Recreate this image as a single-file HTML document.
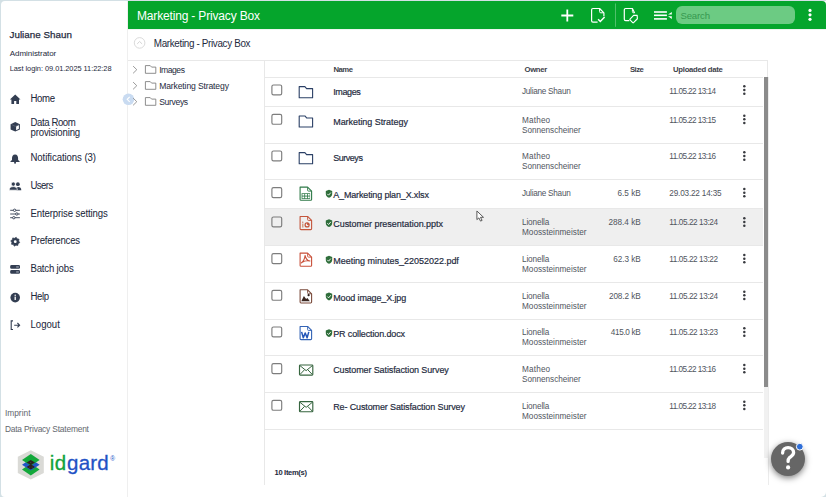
<!DOCTYPE html>
<html><head><meta charset="utf-8"><style>
html,body{margin:0;padding:0;width:826px;height:497px;overflow:hidden;background:#fff;}
body{position:relative;font-family:"Liberation Sans",sans-serif;}
.t{position:absolute;white-space:nowrap;}
svg{position:absolute;overflow:visible;}
</style></head><body>
<div style="position:absolute;left:0px;top:0px;width:826px;height:497px;background:#d3e0e5;"></div>
<div style="position:absolute;left:1px;top:1px;width:127px;height:496px;background:#fff;border-radius:4px 0 0 4px;"></div>
<div style="position:absolute;left:127px;top:1px;width:1px;height:496px;background:#efefef;"></div>
<div style="position:absolute;left:128px;top:1px;width:698px;height:496px;background:#fff;border-bottom-right-radius:5px;"></div>
<div style="position:absolute;left:128px;top:1px;width:698px;height:28px;background:#05a52c;border-top-right-radius:4px;"></div>
<div style="position:absolute;left:128px;top:29px;width:698px;height:1px;background:#eef6f0;"></div>
<div class="t" style="left:9.50px;top:28.00px;font-size:9.8px;line-height:13px;color:#1e2a3d;letter-spacing:0.024px;-webkit-text-stroke:0.25px #1e2a3d;">Juliane Shaun</div>
<div class="t" style="left:9.70px;top:48.00px;font-size:8.0px;line-height:11px;color:#1e2a3d;letter-spacing:-0.044px;">Administrator</div>
<div class="t" style="left:9.70px;top:63.00px;font-size:7.4px;line-height:11px;color:#1e2a3d;letter-spacing:-0.038px;">Last login: 09.01.2025 11:22:28</div>
<div class="t" style="left:30.50px;top:92.00px;font-size:9.6px;line-height:13px;color:#1e2a3d;letter-spacing:-0.371px;-webkit-text-stroke:0.05px #1e2a3d;transform:scaleY(1.06);transform-origin:0 10px;">Home</div>
<div class="t" style="left:30.50px;top:116.00px;font-size:9.6px;line-height:13px;color:#1e2a3d;letter-spacing:-0.407px;-webkit-text-stroke:0.05px #1e2a3d;transform:scaleY(1.06);transform-origin:0 10px;">Data Room</div>
<div class="t" style="left:30.50px;top:126.00px;font-size:9.6px;line-height:13px;color:#1e2a3d;letter-spacing:-0.139px;-webkit-text-stroke:0.05px #1e2a3d;transform:scaleY(1.06);transform-origin:0 10px;">provisioning</div>
<div class="t" style="left:30.50px;top:151.00px;font-size:9.6px;line-height:13px;color:#1e2a3d;letter-spacing:-0.074px;-webkit-text-stroke:0.05px #1e2a3d;transform:scaleY(1.06);transform-origin:0 10px;">Notifications (3)</div>
<div class="t" style="left:30.50px;top:179.00px;font-size:9.6px;line-height:13px;color:#1e2a3d;letter-spacing:-0.591px;-webkit-text-stroke:0.05px #1e2a3d;transform:scaleY(1.06);transform-origin:0 10px;">Users</div>
<div class="t" style="left:30.50px;top:207.00px;font-size:9.6px;line-height:13px;color:#1e2a3d;letter-spacing:-0.123px;-webkit-text-stroke:0.05px #1e2a3d;transform:scaleY(1.06);transform-origin:0 10px;">Enterprise settings</div>
<div class="t" style="left:30.50px;top:234.00px;font-size:9.6px;line-height:13px;color:#1e2a3d;letter-spacing:-0.216px;-webkit-text-stroke:0.05px #1e2a3d;transform:scaleY(1.06);transform-origin:0 10px;">Preferences</div>
<div class="t" style="left:30.50px;top:262.00px;font-size:9.6px;line-height:13px;color:#1e2a3d;letter-spacing:-0.180px;-webkit-text-stroke:0.05px #1e2a3d;transform:scaleY(1.06);transform-origin:0 10px;">Batch jobs</div>
<div class="t" style="left:30.50px;top:290.00px;font-size:9.6px;line-height:13px;color:#1e2a3d;letter-spacing:-0.416px;-webkit-text-stroke:0.05px #1e2a3d;transform:scaleY(1.06);transform-origin:0 10px;">Help</div>
<div class="t" style="left:30.50px;top:318.00px;font-size:9.6px;line-height:13px;color:#1e2a3d;letter-spacing:0.007px;-webkit-text-stroke:0.05px #1e2a3d;transform:scaleY(1.06);transform-origin:0 10px;">Logout</div>
<div class="t" style="left:4.90px;top:407.00px;font-size:8.4px;line-height:12px;color:#63676e;letter-spacing:0.005px;">Imprint</div>
<div class="t" style="left:4.90px;top:423.00px;font-size:8.4px;line-height:12px;color:#63676e;letter-spacing:-0.187px;">Data Privacy Statement</div>
<div class="t" style="left:137.00px;top:8.00px;font-size:12.0px;line-height:16px;color:#ffffff;letter-spacing:-0.169px;">Marketing - Privacy Box</div>
<div style="position:absolute;left:676px;top:5.7px;width:118.6px;height:18.3px;background:#6ccb83;border-radius:6px;"></div>
<div class="t" style="left:680.40px;top:9.00px;font-size:9.6px;line-height:13px;color:#36984f;letter-spacing:-0.163px;">Search</div>
<div class="t" style="left:153.80px;top:37.00px;font-size:9.9px;line-height:13px;color:#1e2a3d;letter-spacing:-0.342px;transform:scaleY(1.08);transform-origin:0 10px;">Marketing - Privacy Box</div>
<div style="position:absolute;left:128px;top:60px;width:136px;height:1px;background:#e8e8e8;"></div>
<div class="t" style="left:159.20px;top:64.00px;font-size:8.6px;line-height:12px;color:#1e2a3d;letter-spacing:-0.480px;transform:scaleY(1.06);transform-origin:0 9px;">Images</div>
<div class="t" style="left:159.20px;top:80.00px;font-size:8.6px;line-height:12px;color:#1e2a3d;letter-spacing:-0.140px;transform:scaleY(1.06);transform-origin:0 9px;">Marketing Strategy</div>
<div class="t" style="left:159.20px;top:96.00px;font-size:8.6px;line-height:12px;color:#1e2a3d;letter-spacing:-0.344px;transform:scaleY(1.06);transform-origin:0 9px;">Surveys</div>
<div style="position:absolute;left:264px;top:60px;width:504px;height:1px;background:#e8e8e8;"></div>
<div style="position:absolute;left:264px;top:60px;width:1px;height:425px;background:#e8e8e8;"></div>
<div style="position:absolute;left:767px;top:60px;width:1px;height:17px;background:#e8e8e8;"></div>
<div style="position:absolute;left:768px;top:77px;width:1px;height:408px;background:#ececec;"></div>
<div style="position:absolute;left:264px;top:77px;width:499px;height:1px;background:#e8e8e8;"></div>
<div class="t" style="left:333.40px;top:64.00px;font-size:7.7px;line-height:11px;color:#3d424b;font-weight:bold;letter-spacing:-0.458px;">Name</div>
<div class="t" style="left:524.60px;top:64.00px;font-size:7.7px;line-height:11px;color:#3d424b;font-weight:bold;letter-spacing:-0.341px;">Owner</div>
<div class="t" style="left:630.00px;top:64.00px;font-size:7.7px;line-height:11px;color:#3d424b;font-weight:bold;letter-spacing:-0.536px;">Size</div>
<div class="t" style="left:673.10px;top:64.00px;font-size:7.7px;line-height:11px;color:#3d424b;font-weight:bold;letter-spacing:-0.271px;">Uploaded date</div>
<div style="position:absolute;left:265px;top:106px;width:498px;height:1px;background:#e8e8e8;"></div>
<div class="t" style="left:333.20px;top:86.00px;font-size:9.0px;line-height:12px;color:#1e2a3d;letter-spacing:-0.382px;-webkit-text-stroke:0.18px #1e2a3d;transform:scaleY(1.07);transform-origin:0 9px;">Images</div>
<div class="t" style="left:522.00px;top:86.00px;font-size:8.2px;line-height:11px;color:#50555e;letter-spacing:-0.264px;">Juliane Shaun</div>
<div class="t" style="left:669.30px;top:86.00px;font-size:8.2px;line-height:11px;color:#50555e;letter-spacing:-0.555px;">11.05.22 13:14</div>
<div style="position:absolute;left:265px;top:143px;width:498px;height:1px;background:#e8e8e8;"></div>
<div class="t" style="left:333.20px;top:116.00px;font-size:9.0px;line-height:12px;color:#1e2a3d;letter-spacing:-0.049px;-webkit-text-stroke:0.18px #1e2a3d;transform:scaleY(1.07);transform-origin:0 9px;">Marketing Strategy</div>
<div class="t" style="left:522.00px;top:115.00px;font-size:8.2px;line-height:11px;color:#50555e;letter-spacing:0.171px;">Matheo</div>
<div class="t" style="left:522.00px;top:125.00px;font-size:8.2px;line-height:11px;color:#50555e;letter-spacing:-0.028px;">Sonnenscheiner</div>
<div class="t" style="left:669.30px;top:115.00px;font-size:8.2px;line-height:11px;color:#50555e;letter-spacing:-0.555px;">11.05.22 13:15</div>
<div style="position:absolute;left:265px;top:179px;width:498px;height:1px;background:#e8e8e8;"></div>
<div class="t" style="left:333.20px;top:152.00px;font-size:9.0px;line-height:12px;color:#1e2a3d;letter-spacing:-0.468px;-webkit-text-stroke:0.18px #1e2a3d;transform:scaleY(1.07);transform-origin:0 9px;">Surveys</div>
<div class="t" style="left:522.00px;top:151.00px;font-size:8.2px;line-height:11px;color:#50555e;letter-spacing:0.171px;">Matheo</div>
<div class="t" style="left:522.00px;top:161.00px;font-size:8.2px;line-height:11px;color:#50555e;letter-spacing:-0.028px;">Sonnenscheiner</div>
<div class="t" style="left:669.30px;top:151.00px;font-size:8.2px;line-height:11px;color:#50555e;letter-spacing:-0.555px;">11.05.22 13:16</div>
<div style="position:absolute;left:265px;top:208px;width:498px;height:1px;background:#e8e8e8;"></div>
<div class="t" style="left:333.20px;top:189.00px;font-size:9.0px;line-height:12px;color:#1e2a3d;letter-spacing:-0.152px;-webkit-text-stroke:0.18px #1e2a3d;transform:scaleY(1.07);transform-origin:0 9px;">A_Marketing plan_X.xlsx</div>
<div class="t" style="left:522.00px;top:188.00px;font-size:8.2px;line-height:11px;color:#50555e;letter-spacing:-0.264px;">Juliane Shaun</div>
<div class="t" style="left:617.40px;top:188.00px;font-size:8.2px;line-height:11px;color:#50555e;letter-spacing:0.031px;">6.5 kB</div>
<div class="t" style="left:669.30px;top:188.00px;font-size:8.2px;line-height:11px;color:#50555e;letter-spacing:-0.179px;">29.03.22 14:35</div>
<div style="position:absolute;left:265px;top:209px;width:498px;height:36px;background:#efefef;"></div>
<div style="position:absolute;left:265px;top:245px;width:498px;height:1px;background:#e8e8e8;"></div>
<div class="t" style="left:333.20px;top:218.00px;font-size:9.0px;line-height:12px;color:#1e2a3d;letter-spacing:-0.030px;-webkit-text-stroke:0.18px #1e2a3d;transform:scaleY(1.07);transform-origin:0 9px;">Customer presentation.pptx</div>
<div class="t" style="left:522.00px;top:217.00px;font-size:8.2px;line-height:11px;color:#50555e;letter-spacing:-0.125px;">Lionella</div>
<div class="t" style="left:522.00px;top:227.00px;font-size:8.2px;line-height:11px;color:#50555e;letter-spacing:0.023px;">Moossteinmeister</div>
<div class="t" style="left:608.40px;top:217.00px;font-size:8.2px;line-height:11px;color:#50555e;letter-spacing:0.005px;">288.4 kB</div>
<div class="t" style="left:669.30px;top:217.00px;font-size:8.2px;line-height:11px;color:#50555e;letter-spacing:-0.414px;">11.05.22 13:24</div>
<div style="position:absolute;left:265px;top:282px;width:498px;height:1px;background:#e8e8e8;"></div>
<div class="t" style="left:333.20px;top:255.00px;font-size:9.0px;line-height:12px;color:#1e2a3d;letter-spacing:-0.015px;-webkit-text-stroke:0.18px #1e2a3d;transform:scaleY(1.07);transform-origin:0 9px;">Meeting minutes_22052022.pdf</div>
<div class="t" style="left:522.00px;top:254.00px;font-size:8.2px;line-height:11px;color:#50555e;letter-spacing:-0.125px;">Lionella</div>
<div class="t" style="left:522.00px;top:264.00px;font-size:8.2px;line-height:11px;color:#50555e;letter-spacing:0.023px;">Moossteinmeister</div>
<div class="t" style="left:613.30px;top:254.00px;font-size:8.2px;line-height:11px;color:#50555e;letter-spacing:-0.051px;">62.3 kB</div>
<div class="t" style="left:669.30px;top:254.00px;font-size:8.2px;line-height:11px;color:#50555e;letter-spacing:-0.414px;">11.05.22 13:22</div>
<div style="position:absolute;left:265px;top:319px;width:498px;height:1px;background:#e8e8e8;"></div>
<div class="t" style="left:333.20px;top:292.00px;font-size:9.0px;line-height:12px;color:#1e2a3d;letter-spacing:-0.136px;-webkit-text-stroke:0.18px #1e2a3d;transform:scaleY(1.07);transform-origin:0 9px;">Mood image_X.jpg</div>
<div class="t" style="left:522.00px;top:291.00px;font-size:8.2px;line-height:11px;color:#50555e;letter-spacing:-0.125px;">Lionella</div>
<div class="t" style="left:522.00px;top:301.00px;font-size:8.2px;line-height:11px;color:#50555e;letter-spacing:0.023px;">Moossteinmeister</div>
<div class="t" style="left:608.90px;top:291.00px;font-size:8.2px;line-height:11px;color:#50555e;letter-spacing:-0.066px;">208.2 kB</div>
<div class="t" style="left:669.30px;top:291.00px;font-size:8.2px;line-height:11px;color:#50555e;letter-spacing:-0.414px;">11.05.22 13:24</div>
<div style="position:absolute;left:265px;top:355px;width:498px;height:1px;background:#e8e8e8;"></div>
<div class="t" style="left:333.20px;top:328.00px;font-size:9.0px;line-height:12px;color:#1e2a3d;letter-spacing:-0.131px;-webkit-text-stroke:0.18px #1e2a3d;transform:scaleY(1.07);transform-origin:0 9px;">PR collection.docx</div>
<div class="t" style="left:522.00px;top:327.00px;font-size:8.2px;line-height:11px;color:#50555e;letter-spacing:-0.125px;">Lionella</div>
<div class="t" style="left:522.00px;top:337.00px;font-size:8.2px;line-height:11px;color:#50555e;letter-spacing:0.023px;">Moossteinmeister</div>
<div class="t" style="left:610.70px;top:327.00px;font-size:8.2px;line-height:11px;color:#50555e;letter-spacing:-0.324px;">415.0 kB</div>
<div class="t" style="left:669.30px;top:327.00px;font-size:8.2px;line-height:11px;color:#50555e;letter-spacing:-0.414px;">11.05.22 13:23</div>
<div style="position:absolute;left:265px;top:392px;width:498px;height:1px;background:#e8e8e8;"></div>
<div class="t" style="left:333.20px;top:364.00px;font-size:9.0px;line-height:12px;color:#1e2a3d;letter-spacing:-0.109px;-webkit-text-stroke:0.18px #1e2a3d;transform:scaleY(1.07);transform-origin:0 9px;">Customer Satisfaction Survey</div>
<div class="t" style="left:522.00px;top:364.00px;font-size:8.2px;line-height:11px;color:#50555e;letter-spacing:0.171px;">Matheo</div>
<div class="t" style="left:522.00px;top:374.00px;font-size:8.2px;line-height:11px;color:#50555e;letter-spacing:-0.028px;">Sonnenscheiner</div>
<div class="t" style="left:669.30px;top:364.00px;font-size:8.2px;line-height:11px;color:#50555e;letter-spacing:-0.555px;">11.05.22 13:16</div>
<div style="position:absolute;left:265px;top:429px;width:498px;height:1px;background:#e8e8e8;"></div>
<div class="t" style="left:333.20px;top:401.00px;font-size:9.0px;line-height:12px;color:#1e2a3d;letter-spacing:-0.124px;-webkit-text-stroke:0.18px #1e2a3d;transform:scaleY(1.07);transform-origin:0 9px;">Re- Customer Satisfaction Survey</div>
<div class="t" style="left:522.00px;top:401.00px;font-size:8.2px;line-height:11px;color:#50555e;letter-spacing:-0.125px;">Lionella</div>
<div class="t" style="left:522.00px;top:411.00px;font-size:8.2px;line-height:11px;color:#50555e;letter-spacing:0.023px;">Moossteinmeister</div>
<div class="t" style="left:669.30px;top:401.00px;font-size:8.2px;line-height:11px;color:#50555e;letter-spacing:-0.555px;">11.05.22 13:18</div>
<div class="t" style="left:49.80px;top:450.00px;font-size:20.5px;line-height:25px;color:#12a33a;letter-spacing:0.451px;-webkit-text-stroke:0.3px #12a33a;">id</div>
<div class="t" style="left:67.00px;top:450.00px;font-size:20.5px;line-height:25px;color:#1f52c4;letter-spacing:0.227px;-webkit-text-stroke:0.3px #2255c8;">gard</div>
<div class="t" style="left:110.20px;top:454.00px;font-size:6.5px;line-height:9px;color:#2255c8;">®</div>
<div class="t" style="left:274.60px;top:467.00px;font-size:7.6px;line-height:11px;color:#1e2a3d;font-weight:bold;letter-spacing:-0.342px;">10 Item(s)</div>
<div style="position:absolute;left:764px;top:77px;width:4px;height:381px;background:#f1f1f1;"></div>
<div style="position:absolute;left:764px;top:77px;width:4px;height:310px;background:#8b8b8b;"></div>
<div style="position:absolute;left:771px;top:442px;width:34px;height:34px;background:#666;border-radius:50%;box-shadow:0 2px 6px rgba(0,0,0,0.5);"></div>
<svg width="826" height="497" style="left:0;top:0" viewBox="0 0 826 497"><path d="M561.3 15.5H573.3M567.3 9.5V21.5" stroke="#fff" stroke-width="1.8" fill="none"/><path d="M597.6 22.2H593Q591.6 22.2 591.6 20.8V9.9Q591.6 8.5 593 8.5H599.6L603.9 12.9V16.3" stroke="#fff" stroke-width="1.2" fill="none" stroke-linejoin="round"/><path d="M599.6 8.7V11.6Q599.6 12.8 600.8 12.8H603.7" stroke="#fff" stroke-width="1" fill="none"/><path d="M598.1 19.2L600.3 21.5L604.6 17" stroke="#fff" stroke-width="1.5" fill="none"/><path d="M615.5 3.5V26.8" stroke="rgba(255,255,255,0.3)" stroke-width="1"/><path d="M629.3 20.6H625.7Q624.3 20.6 624.3 19.2V9.9Q624.3 8.5 625.7 8.5H632.4L634.6 12.9" stroke="#fff" stroke-width="1.2" fill="none" stroke-linejoin="round"/><path d="M632.4 8.7V11.6Q632.4 12.8 633.6 12.8H634.4" stroke="#fff" stroke-width="1" fill="none"/><g transform="rotate(-45 634.2 18.4)"><path d="M630.8 15.9H636.2L638.4 18.4L636.2 20.9H630.8Q630.2 20.9 630.2 20.3V16.5Q630.2 15.9 630.8 15.9Z" stroke="#fff" stroke-width="1.15" fill="#05a52c" stroke-linejoin="round"/></g><rect x="654" y="11.2" width="12.9" height="1.6" fill="#fff"/><rect x="654" y="14.5" width="12.9" height="1.6" fill="#fff"/><rect x="654" y="18.1" width="12.9" height="1.6" fill="#fff"/><path d="M668.1 14.5H671.8V11.9Z M668.1 16.3H671.8V18.9Z" fill="#fff"/><circle cx="810" cy="10.4" r="1.6" fill="#fff"/><circle cx="810" cy="14.8" r="1.6" fill="#fff"/><circle cx="810" cy="19.3" r="1.6" fill="#fff"/><path d="M15.2 94.5L9.9 99.4H11.4V104H14.1V100.9H16.3V104H19V99.4H20.5Z" fill="#333e52"/><path d="M15.25 122L19.9 124.2V129.4L15.25 131.6L10.6 129.4V124.2Z" fill="#333e52"/><path d="M16.1 126.4L18.9 125V128.8L16.1 130.2Z" fill="#fff"/><path d="M11.6 124.6L15.25 126.3L18.9 124.6" stroke="#6b7384" stroke-width="0.6" fill="none"/><path d="M15.05 154.5C12.8 154.5 12 156.4 12 158.4V160L10.5 161.2V161.9H19.6V161.2L18.1 160V158.4C18.1 156.4 17.3 154.5 15.05 154.5Z" fill="#333e52"/><circle cx="15.05" cy="162.7" r="1" fill="#333e52"/><circle cx="17.9" cy="184.2" r="1.9" fill="#333e52"/><path d="M16.5 190.2C16.5 187.9 17.2 186.9 18.2 186.9C20.2 186.9 21.3 188 21.3 190.2Z" fill="#333e52"/><circle cx="13.3" cy="184.1" r="2.1" fill="#333e52" stroke="#fff" stroke-width="0.7"/><path d="M9.2 190.2C9.2 187.6 11.2 186.6 13.3 186.6C15.4 186.6 17.4 187.6 17.4 190.2Z" fill="#333e52" stroke="#fff" stroke-width="0.7"/><path d="M10.2 210.3H19.9" stroke="#333e52" stroke-width="0.9"/><circle cx="14.6" cy="210.3" r="1.2" fill="#fff" stroke="#333e52" stroke-width="0.9"/><path d="M10.2 214.0H19.9" stroke="#333e52" stroke-width="0.9"/><circle cx="16.8" cy="214.0" r="1.2" fill="#fff" stroke="#333e52" stroke-width="0.9"/><path d="M10.2 217.7H19.9" stroke="#333e52" stroke-width="0.9"/><circle cx="13.8" cy="217.7" r="1.2" fill="#fff" stroke="#333e52" stroke-width="0.9"/><path d="M16.15 237.19L17.19 238.79L19.07 239.14L18.68 241.02L19.76 242.60L18.16 243.64L17.81 245.52L15.93 245.13L14.35 246.21L13.31 244.61L11.43 244.26L11.82 242.38L10.74 240.80L12.34 239.76L12.69 237.88L14.57 238.27Z" fill="#333e52" stroke="#333e52" stroke-width="0.6" stroke-linejoin="round"/><circle cx="15.25" cy="241.7" r="1.4" fill="#fff"/><rect x="10.2" y="265.1" width="9.8" height="3.7" rx="1.3" fill="#333e52"/><rect x="10.2" y="270.1" width="9.8" height="3.7" rx="1.3" fill="#333e52"/><rect x="16.2" y="266.2" width="2.6" height="1.5" fill="#8a92a0"/><rect x="16.2" y="271.2" width="2.6" height="1.5" fill="#8a92a0"/><circle cx="15.2" cy="297.6" r="4.8" fill="#333e52"/><rect x="14.55" y="296.6" width="1.3" height="3.4" fill="#fff"/><circle cx="15.2" cy="295.2" r="0.75" fill="#fff"/><path d="M13 320.9H11.2V329.5H13" stroke="#333e52" stroke-width="1.1" fill="none"/><path d="M14.2 325.2H19.6M17.4 323L19.6 325.2L17.4 327.4" stroke="#333e52" stroke-width="1.1" fill="none"/><circle cx="139.6" cy="42.9" r="5.3" stroke="#d6d6d6" stroke-width="0.9" fill="none"/><path d="M137.2 43.9L139.6 41.5L142.1 43.9" stroke="#cfcfcf" stroke-width="0.9" fill="none"/><circle cx="128.45" cy="99.3" r="5.8" fill="#c9dbf1"/><path d="M129.7 96.8L127.2 99.3L129.7 101.8" stroke="#fff" stroke-width="1.1" fill="none"/><path d="M133.1 66.1L136.8 69.7L133.1 73.3" stroke="#8e8e8e" stroke-width="0.9" fill="none"/><path d="M145.4 73.3V65.6H150.2L151.6 67.1H155.8V73.3Z" stroke="#7a7a7a" stroke-width="0.85" fill="none"/><path d="M133.1 82.1L136.8 85.7L133.1 89.3" stroke="#8e8e8e" stroke-width="0.9" fill="none"/><path d="M145.4 89.3V81.6H150.2L151.6 83.1H155.8V89.3Z" stroke="#7a7a7a" stroke-width="0.85" fill="none"/><path d="M133.1 98.1L136.8 101.7L133.1 105.3" stroke="#8e8e8e" stroke-width="0.9" fill="none"/><path d="M145.4 105.3V97.6H150.2L151.6 99.1H155.8V105.3Z" stroke="#7a7a7a" stroke-width="0.85" fill="none"/><rect x="271.9" y="85.00" width="9.8" height="9.9" rx="1.6" stroke="#7d7d7d" stroke-width="1.15" fill="none"/><path d="M299.2 97.70V86.60H304.9L306.6 88.60H312.6V97.70Z" stroke="#2b4066" stroke-width="1.1" fill="none" stroke-linejoin="round"/><circle cx="744.3" cy="86.30" r="1.25" fill="#383a3f"/><circle cx="744.3" cy="90.00" r="1.25" fill="#383a3f"/><circle cx="744.3" cy="93.70" r="1.25" fill="#383a3f"/><rect x="271.9" y="114.33" width="9.8" height="9.9" rx="1.6" stroke="#7d7d7d" stroke-width="1.15" fill="none"/><path d="M299.2 127.03V115.93H304.9L306.6 117.93H312.6V127.03Z" stroke="#2b4066" stroke-width="1.1" fill="none" stroke-linejoin="round"/><circle cx="744.3" cy="115.63" r="1.25" fill="#383a3f"/><circle cx="744.3" cy="119.33" r="1.25" fill="#383a3f"/><circle cx="744.3" cy="123.03" r="1.25" fill="#383a3f"/><rect x="271.9" y="151.00" width="9.8" height="9.9" rx="1.6" stroke="#7d7d7d" stroke-width="1.15" fill="none"/><path d="M299.2 163.70V152.60H304.9L306.6 154.60H312.6V163.70Z" stroke="#2b4066" stroke-width="1.1" fill="none" stroke-linejoin="round"/><circle cx="744.3" cy="152.30" r="1.25" fill="#383a3f"/><circle cx="744.3" cy="156.00" r="1.25" fill="#383a3f"/><circle cx="744.3" cy="159.70" r="1.25" fill="#383a3f"/><rect x="271.9" y="187.67" width="9.8" height="9.9" rx="1.6" stroke="#7d7d7d" stroke-width="1.15" fill="none"/><path d="M300.1 187.11999999999998H307.6L311.6 191.11999999999998V199.42Q311.6 200.32 310.7 200.32H301Q300.1 200.32 300.1 199.42Z" stroke="#2f7a48" stroke-width="1.1" fill="none" stroke-linejoin="round"/><path d="M307.6 187.32V190.21999999999997Q307.6 191.11999999999998 308.5 191.11999999999998H311.4" stroke="#2f7a48" stroke-width="0.9" fill="none"/><rect x="301.6" y="193.21999999999997" width="8.5" height="5.7" fill="#2f7a48"/><rect x="302.4" y="193.92" width="1.9" height="1.7" fill="#fff"/><rect x="302.4" y="196.51999999999998" width="1.9" height="1.7" fill="#fff"/><rect x="305.1" y="193.92" width="1.9" height="1.7" fill="#fff"/><rect x="305.1" y="196.51999999999998" width="1.9" height="1.7" fill="#fff"/><rect x="307.8" y="193.92" width="1.9" height="1.7" fill="#fff"/><rect x="307.8" y="196.51999999999998" width="1.9" height="1.7" fill="#fff"/><path d="M329 189.87L332.2 191.07V193.67C332.2 195.67 330.9 197.07 329 197.77C327.1 197.07 325.8 195.67 325.8 193.67V191.07Z" fill="#2f6e3b"/><path d="M327.3 193.87L328.6 195.17L330.8 192.57" stroke="#fff" stroke-width="0.9" fill="none"/><circle cx="744.3" cy="188.97" r="1.25" fill="#383a3f"/><circle cx="744.3" cy="192.67" r="1.25" fill="#383a3f"/><circle cx="744.3" cy="196.37" r="1.25" fill="#383a3f"/><rect x="271.9" y="217.00" width="9.8" height="9.9" rx="1.6" stroke="#7d7d7d" stroke-width="1.15" fill="none"/><path d="M300.1 216.45H307.6L311.6 220.45V228.75Q311.6 229.65 310.7 229.65H301Q300.1 229.65 300.1 228.75Z" stroke="#c4553b" stroke-width="1.1" fill="none" stroke-linejoin="round"/><path d="M307.6 216.65V219.54999999999998Q307.6 220.45 308.5 220.45H311.4" stroke="#c4553b" stroke-width="0.9" fill="none"/><rect x="302.2" y="223.54999999999998" width="1.2" height="4" fill="#d08a6a"/><circle cx="302.8" cy="222.15" r="0.6" fill="#c4553b"/><circle cx="307.1" cy="224.95" r="2" stroke="#c4553b" stroke-width="1.2" fill="none"/><path d="M307.1 224.95V222.65A2.3 2.3 0 0 1 309.4 224.95Z" fill="#c4553b"/><path d="M329 219.20000000000002L332.2 220.4V223.0C332.2 225.0 330.9 226.4 329 227.10000000000002C327.1 226.4 325.8 225.0 325.8 223.0V220.4Z" fill="#2f6e3b"/><path d="M327.3 223.20000000000002L328.6 224.5L330.8 221.9" stroke="#fff" stroke-width="0.9" fill="none"/><circle cx="744.3" cy="218.30" r="1.25" fill="#383a3f"/><circle cx="744.3" cy="222.00" r="1.25" fill="#383a3f"/><circle cx="744.3" cy="225.70" r="1.25" fill="#383a3f"/><rect x="271.9" y="253.67" width="9.8" height="9.9" rx="1.6" stroke="#7d7d7d" stroke-width="1.15" fill="none"/><path d="M300.1 253.11999999999998H307.6L311.6 257.12V265.41999999999996Q311.6 266.32 310.7 266.32H301Q300.1 266.32 300.1 265.41999999999996Z" stroke="#c9503a" stroke-width="1.1" fill="none" stroke-linejoin="round"/><path d="M307.6 253.32V256.21999999999997Q307.6 257.12 308.5 257.12H311.4" stroke="#c9503a" stroke-width="0.9" fill="none"/><path d="M305.1 255.42C304.7 258.52 303.6 261.62 301.2 262.92M305.1 255.42C305.6 258.62 307.3 260.62 310 261.02M302.3 262.22C304.5 260.82 307.2 260.52 310 261.02" stroke="#c9503a" stroke-width="1.05" fill="none" stroke-linecap="round"/><path d="M329 255.87L332.2 257.07V259.67C332.2 261.67 330.9 263.07 329 263.77C327.1 263.07 325.8 261.67 325.8 259.67V257.07Z" fill="#2f6e3b"/><path d="M327.3 259.87L328.6 261.17L330.8 258.57" stroke="#fff" stroke-width="0.9" fill="none"/><circle cx="744.3" cy="254.97" r="1.25" fill="#383a3f"/><circle cx="744.3" cy="258.67" r="1.25" fill="#383a3f"/><circle cx="744.3" cy="262.37" r="1.25" fill="#383a3f"/><rect x="271.9" y="290.33" width="9.8" height="9.9" rx="1.6" stroke="#7d7d7d" stroke-width="1.15" fill="none"/><path d="M300.1 289.78000000000003H307.6L311.6 293.78000000000003V302.08Q311.6 302.98 310.7 302.98H301Q300.1 302.98 300.1 302.08Z" stroke="#7b4b3c" stroke-width="1.1" fill="none" stroke-linejoin="round"/><path d="M307.6 289.98V292.88Q307.6 293.78000000000003 308.5 293.78000000000003H311.4" stroke="#7b4b3c" stroke-width="0.9" fill="none"/><path d="M301.3 301.18L303.9 295.88L306.1 299.08L307.4 297.98L309.9 301.18Z" fill="#3a2620"/><circle cx="308.6" cy="295.18" r="1.1" fill="#2a1a16"/><path d="M329 292.53L332.2 293.73V296.33C332.2 298.33 330.9 299.73 329 300.43C327.1 299.73 325.8 298.33 325.8 296.33V293.73Z" fill="#2f6e3b"/><path d="M327.3 296.53L328.6 297.83L330.8 295.23" stroke="#fff" stroke-width="0.9" fill="none"/><circle cx="744.3" cy="291.63" r="1.25" fill="#383a3f"/><circle cx="744.3" cy="295.33" r="1.25" fill="#383a3f"/><circle cx="744.3" cy="299.03" r="1.25" fill="#383a3f"/><rect x="271.9" y="327.00" width="9.8" height="9.9" rx="1.6" stroke="#7d7d7d" stroke-width="1.15" fill="none"/><path d="M300.1 326.45000000000005H307.6L311.6 330.45000000000005V338.75Q311.6 339.65000000000003 310.7 339.65000000000003H301Q300.1 339.65000000000003 300.1 338.75Z" stroke="#3363b5" stroke-width="1.1" fill="none" stroke-linejoin="round"/><path d="M307.6 326.65000000000003V329.55Q307.6 330.45000000000005 308.5 330.45000000000005H311.4" stroke="#3363b5" stroke-width="0.9" fill="none"/><path d="M301.6 331.85L303.3 337.85L305.2 332.95000000000005L307.1 337.85L308.8 331.85" stroke="#2356b8" stroke-width="1.5" fill="none" stroke-linejoin="round"/><path d="M329 329.2L332.2 330.40000000000003V333.0C332.2 335.0 330.9 336.40000000000003 329 337.1C327.1 336.40000000000003 325.8 335.0 325.8 333.0V330.40000000000003Z" fill="#2f6e3b"/><path d="M327.3 333.2L328.6 334.5L330.8 331.90000000000003" stroke="#fff" stroke-width="0.9" fill="none"/><circle cx="744.3" cy="328.30" r="1.25" fill="#383a3f"/><circle cx="744.3" cy="332.00" r="1.25" fill="#383a3f"/><circle cx="744.3" cy="335.70" r="1.25" fill="#383a3f"/><rect x="271.9" y="363.67" width="9.8" height="9.9" rx="1.6" stroke="#7d7d7d" stroke-width="1.15" fill="none"/><rect x="299.5" y="364.96999999999997" width="13.3" height="10.1" rx="0.8" stroke="#36653f" stroke-width="1.15" fill="none"/><path d="M300 365.67L306.15 370.67L312.3 365.67M300 374.46999999999997L304.6 369.67M312.3 374.46999999999997L307.7 369.67" stroke="#36653f" stroke-width="1.0" fill="none"/><circle cx="744.3" cy="364.97" r="1.25" fill="#383a3f"/><circle cx="744.3" cy="368.67" r="1.25" fill="#383a3f"/><circle cx="744.3" cy="372.37" r="1.25" fill="#383a3f"/><rect x="271.9" y="400.33" width="9.8" height="9.9" rx="1.6" stroke="#7d7d7d" stroke-width="1.15" fill="none"/><rect x="299.5" y="401.62999999999994" width="13.3" height="10.1" rx="0.8" stroke="#36653f" stroke-width="1.15" fill="none"/><path d="M300 402.33L306.15 407.33L312.3 402.33M300 411.12999999999994L304.6 406.33M312.3 411.12999999999994L307.7 406.33" stroke="#36653f" stroke-width="1.0" fill="none"/><circle cx="744.3" cy="401.63" r="1.25" fill="#383a3f"/><circle cx="744.3" cy="405.33" r="1.25" fill="#383a3f"/><circle cx="744.3" cy="409.03" r="1.25" fill="#383a3f"/><path d="M782.6 453C782.6 449.6 785 447.6 788.1 447.6C791.2 447.6 793.6 449.7 793.6 452.6C793.6 455.5 790.9 456.4 789.4 457.7C788.4 458.6 788.1 459.4 788.1 461.4" stroke="#fff" stroke-width="3.3" fill="none" stroke-linecap="round"/><circle cx="788.1" cy="467.4" r="2.1" fill="#fff"/><circle cx="799.8" cy="446.7" r="3.4" fill="#2f6fd8" stroke="#fff" stroke-width="1"/><path d="M30.8 450.2L43.8 456.7V473.1L30.8 479.6L17.8 473.1V456.7Z" fill="#dadad6"/><path d="M30.8 463.6L39.6 469.5L30.8 475.4L22 469.5Z" fill="#12a83a"/><path d="M30.8 458.9L39.6 464.7L30.8 470.5L22 464.7Z" fill="#2255c8"/><path d="M30.8 454L39.6 459.9L30.8 465.8L22 459.9Z" fill="#12a83a"/><path d="M30.8 459.9L35 462.5L30.8 465.1L26.6 462.5Z M30.8 464.3L35 466.9L30.8 469.5L26.6 466.9Z" fill="#2a2020"/><circle cx="30.8" cy="462.4" r="0.4" fill="#4a8a4a"/><circle cx="29.5" cy="467.1" r="0.4" fill="#4a8a4a"/><circle cx="32.1" cy="467.1" r="0.4" fill="#4a8a4a"/><path d="M476.9 211V219.6L478.9 217.9L480.5 221.1L482.1 220.4L480.5 217.3H483.5Z" fill="#fff" stroke="#4a4a4a" stroke-width="0.9" stroke-linejoin="round"/></svg>
</body></html>
